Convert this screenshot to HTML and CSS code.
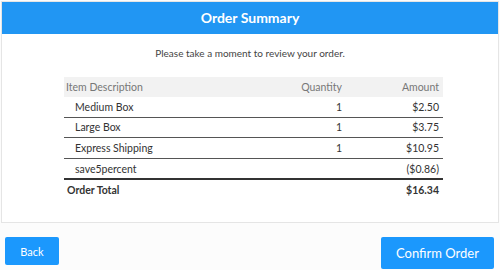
FILE: index.html
```html
<!DOCTYPE html>
<html lang="en">
<head>
    <meta charset="UTF-8">
    <meta name="viewport" content="width=device-width, initial-scale=1.0">
    <title>Order Summary</title>
    <link rel="stylesheet" href="styles.css">
</head>
<body>
    <div class="page">
        <div class="card">
            <h1 class="card-header">Order Summary</h1>
            <p class="intro">Please take a moment to review your order.</p>
            <table class="order-table">
                <thead>
                    <tr>
                        <th class="col-desc">Item Description</th>
                        <th class="col-qty">Quantity</th>
                        <th class="col-amount">Amount</th>
                    </tr>
                </thead>
                <tbody>
                    <tr class="item">
                        <td class="col-desc">Medium Box</td>
                        <td class="col-qty">1</td>
                        <td class="col-amount">$2.50</td>
                    </tr>
                    <tr class="item">
                        <td class="col-desc">Large Box</td>
                        <td class="col-qty">1</td>
                        <td class="col-amount">$3.75</td>
                    </tr>
                    <tr class="item">
                        <td class="col-desc">Express Shipping</td>
                        <td class="col-qty">1</td>
                        <td class="col-amount">$10.95</td>
                    </tr>
                    <tr class="item discount">
                        <td class="col-desc">save5percent</td>
                        <td class="col-qty"></td>
                        <td class="col-amount">($0.86)</td>
                    </tr>
                    <tr class="total">
                        <td class="col-desc">Order Total</td>
                        <td class="col-qty"></td>
                        <td class="col-amount">$16.34</td>
                    </tr>
                </tbody>
            </table>
        </div>
        <div class="actions">
            <button class="btn btn-back">Back</button>
            <button class="btn btn-confirm">Confirm Order</button>
        </div>
    </div>
</body>
</html>
```

FILE: styles.css
```css
body {
    margin: 0;
    padding: 0;
    font-family: Lato, "Open Sans", Arial, sans-serif;
    background-color: #fff;
}

.page {
    background-color: #fcfcfc;
    height: 270px;
    padding: 1px 1px 0;
    box-sizing: border-box;
}

.card {
    background: #fff;
    border: 1px solid #e5e5e5;
    height: 222px;
    box-sizing: border-box;
}

.card-header {
    margin: 0;
    height: 32px;
    line-height: 32px;
    background-color: #2196f3;
    color: #fff;
    font-size: 14px;
    font-weight: 700;
    text-align: center;
}

.intro {
    margin: 11px 0 0;
    font-size: 10px;
    line-height: 16px;
    color: #444;
    text-align: center;
}

.order-table {
    width: 379px;
    margin: 16px 0 0 62px;
    border-collapse: collapse;
    font-size: 10.5px;
    color: #333;
}

.order-table th {
    background-color: #f2f2f2;
    color: #777;
    font-weight: 400;
    height: 20px;
    padding: 0 4px 0 2px;
}

.order-table td {
    height: 19.6px;
    padding: 0 4px 0 2px;
}

.col-desc {
    text-align: left;
}

.col-qty {
    width: 100px;
    text-align: right;
}

.col-amount {
    width: 91px;
    text-align: right;
}

.item td {
    border-bottom: 1px solid #555;
}

.item .col-desc {
    padding-left: 11px;
}

.discount td {
    border-bottom: 2px solid #333;
}

.total td {
    font-weight: 700;
    color: #333;
}

.total .col-desc {
    padding-left: 3px;
}

.actions {
    display: flex;
    justify-content: space-between;
    align-items: flex-start;
    padding: 14px 5px 0 4px;
}

.btn {
    background-color: #1b98fd;
    color: #fff;
    border: none;
    border-radius: 2px;
    font-family: inherit;
    cursor: pointer;
}

.btn-back {
    width: 54px;
    height: 28px;
    font-size: 11px;
}

.btn-confirm {
    width: 113px;
    height: 32px;
    font-size: 13px;
}
```
